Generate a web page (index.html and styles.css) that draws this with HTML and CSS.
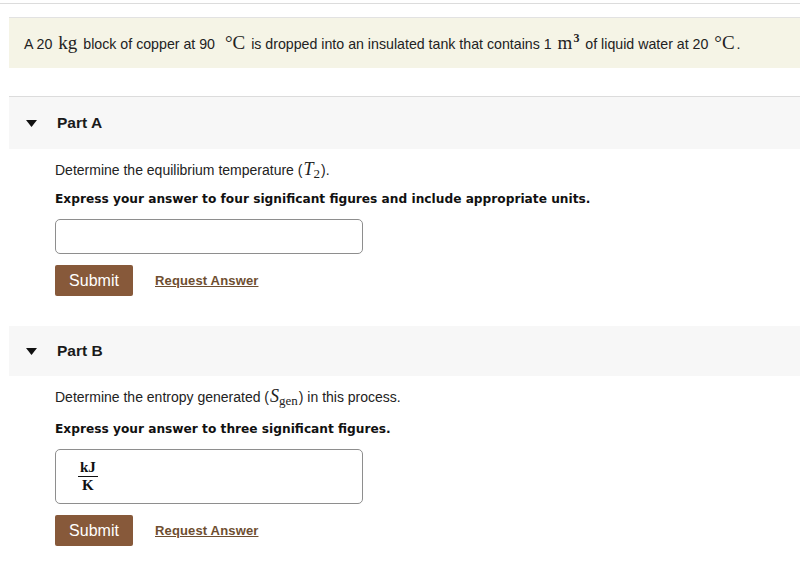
FILE: index.html
```html
<!DOCTYPE html>
<html>
<head>
<meta charset="utf-8">
<link rel="stylesheet" href="styles.css">
</head>
<body>
<div class="topline"></div>
<div class="page">
  <div class="intro">
    <p class="intro-text">A 20 <span class="m">kg</span> block of copper at 90 &nbsp;<span class="m">°C</span> is dropped into an insulated tank that contains 1 <span class="m">m<sup>3</sup></span> of liquid water at 20 <span class="m">°C</span>.</p>
  </div>

  <section class="part first">
    <div class="part-head">
      <svg class="tri" width="11" height="7" viewBox="0 0 11 7"><polygon points="0,0 11,0 5.5,7" fill="#111"/></svg>
      <span class="part-title">Part A</span>
    </div>
    <div class="part-body">
      <p class="q">Determine the equilibrium temperature (<span class="mi">T</span><sub class="sb">2</sub>).</p>
      <p class="instr">Express your answer to four significant figures and include appropriate units.</p>
      <div class="answer"></div>
      <div class="actions">
        <button class="submit">Submit</button>
        <a class="req">Request Answer</a>
      </div>
    </div>
  </section>

  <section class="part second">
    <div class="part-head">
      <svg class="tri" width="11" height="7" viewBox="0 0 11 7"><polygon points="0,0 11,0 5.5,7" fill="#111"/></svg>
      <span class="part-title">Part B</span>
    </div>
    <div class="part-body">
      <p class="q">Determine the entropy generated (<span class="mi">S</span><sub class="sb">gen</sub>) in this process.</p>
      <p class="instr">Express your answer to three significant figures.</p>
      <div class="answer tall">
        <span class="frac"><span class="num">kJ</span><span class="den">K</span></span>
      </div>
      <div class="actions">
        <button class="submit">Submit</button>
        <a class="req">Request Answer</a>
      </div>
    </div>
  </section>
</div>
</body>
</html>
```

FILE: styles.css
```css
html, body {
  margin: 0;
  padding: 0;
  background: #fff;
}
body {
  font-family: "Liberation Sans", Arial, sans-serif;
  font-size: 14px;
  color: #222;
}
.topline {
  height: 3px;
  border-bottom: 1px solid #dcdcdc;
}
.page {
  padding-left: 9px;
  padding-top: 13px;
}
.intro {
  background: #f5f4e6;
  border-top: 1px solid #e2e2e2;
  display: flex;
  align-items: center;
  padding-left: 15px;
  padding-top: 1px;
  box-sizing: border-box;
  height: 51px;
}
.intro-text {
  margin: 0;
  line-height: 20px;
  font-size: 14.2px;
}
.intro .m {
  font-family: "Liberation Serif", "Times New Roman", serif;
  font-size: 19px;
  margin: 0 2px;
}
.intro sup {
  font-size: 12px;
  font-weight: bold;
  vertical-align: 7px;
  line-height: 0;
  margin-left: 1px;
}
.part.first {
  margin-top: 28px;
  border-top: 1px solid #dcdcdc;
}
.part.second {
  margin-top: 30px;
}
.part-head {
  background: #f7f7f7;
  height: 52px;
  display: flex;
  align-items: center;
  padding-left: 17px;
}
.second .part-head {
  height: 50px;
}
.tri {
  display: block;
  margin-right: 20px;
}
.part-title {
  font-weight: bold;
  font-size: 15.5px;
  color: #1a1a1a;
}
.part-body {
  padding-left: 46px;
}
.q {
  margin: 10px 0 0;
  line-height: 20px;
}
.second .q {
  margin-top: 10px;
}
.mi {
  font-family: "Liberation Serif", "Times New Roman", serif;
  font-style: italic;
  font-size: 18px;
  margin-left: 1px;
}
.sb {
  font-family: "Liberation Serif", "Times New Roman", serif;
  font-size: 13px;
  line-height: 0;
  vertical-align: -3px;
  margin-right: 1px;
}
.instr {
  margin: 9px 0 0;
  line-height: 20px;
  font-family: "DejaVu Sans", Verdana, sans-serif;
  font-weight: bold;
  font-size: 12.2px;
  color: #111;
}
.second .instr {
  margin-top: 12px;
}
.answer {
  margin-top: 10px;
  width: 308px;
  height: 35px;
  box-sizing: border-box;
  border: 1px solid #8e8e8e;
  border-radius: 5px;
  background: #fff;
}
.answer.tall {
  height: 55px;
  display: flex;
  align-items: center;
  padding-left: 22px;
}
.frac {
  display: inline-flex;
  flex-direction: column;
  align-items: center;
  font-family: "Liberation Serif", "Times New Roman", serif;
  font-size: 15px;
  line-height: 15px;
  color: #111;
  font-weight: bold;
}
.frac .num {
  border-bottom: 1px solid #111;
  padding: 0 2px 1px;
}
.frac .den {
  padding-top: 1px;
}
.actions {
  margin-top: 11px;
  display: flex;
  align-items: center;
}
.submit {
  width: 78px;
  height: 31px;
  border: none;
  border-radius: 2px;
  background: #87593a;
  color: #fff;
  font-family: "Liberation Sans", Arial, sans-serif;
  font-size: 16px;
  padding: 0;
}
.req {
  margin-left: 22px;
  font-weight: bold;
  font-size: 13px;
  letter-spacing: 0.15px;
  color: #6e4e30;
  text-decoration: underline;
}
```
